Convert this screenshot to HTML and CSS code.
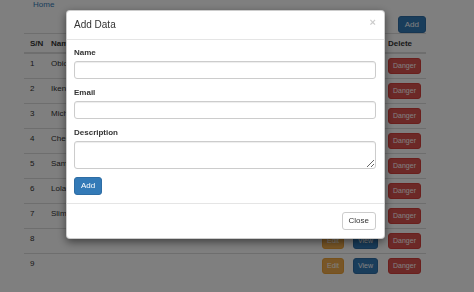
FILE: index.html
```html
<!DOCTYPE html>
<html lang="en">
<head>
<meta charset="utf-8">
<title>Add Data</title>
<link rel="stylesheet" href="styles.css">
</head>
<body>
<div class="page">
  <nav class="nav"><a class="home" href="#">Home</a></nav>
  <div class="toolbar"><button class="btn btn-primary btn-top">Add</button></div>
  <table class="table">
    <colgroup>
      <col class="c-sn"><col class="c-name"><col class="c-edit"><col class="c-view"><col class="c-del">
    </colgroup>
    <thead>
      <tr><th>S/N</th><th>Name</th><th>Edit</th><th>View</th><th>Delete</th></tr>
    </thead>
    <tbody>
      <tr><td>1</td><td>Obiora</td><td><button class="btn btn-xs btn-warning">Edit</button></td><td><button class="btn btn-xs btn-primary">View</button></td><td><button class="btn btn-xs btn-danger">Danger</button></td></tr>
      <tr><td>2</td><td>Ikenna</td><td><button class="btn btn-xs btn-warning">Edit</button></td><td><button class="btn btn-xs btn-primary">View</button></td><td><button class="btn btn-xs btn-danger">Danger</button></td></tr>
      <tr><td>3</td><td>Michael</td><td><button class="btn btn-xs btn-warning">Edit</button></td><td><button class="btn btn-xs btn-primary">View</button></td><td><button class="btn btn-xs btn-danger">Danger</button></td></tr>
      <tr><td>4</td><td>Chester</td><td><button class="btn btn-xs btn-warning">Edit</button></td><td><button class="btn btn-xs btn-primary">View</button></td><td><button class="btn btn-xs btn-danger">Danger</button></td></tr>
      <tr><td>5</td><td>Samuel</td><td><button class="btn btn-xs btn-warning">Edit</button></td><td><button class="btn btn-xs btn-primary">View</button></td><td><button class="btn btn-xs btn-danger">Danger</button></td></tr>
      <tr><td>6</td><td>Lola</td><td><button class="btn btn-xs btn-warning">Edit</button></td><td><button class="btn btn-xs btn-primary">View</button></td><td><button class="btn btn-xs btn-danger">Danger</button></td></tr>
      <tr><td>7</td><td>Slim</td><td><button class="btn btn-xs btn-warning">Edit</button></td><td><button class="btn btn-xs btn-primary">View</button></td><td><button class="btn btn-xs btn-danger">Danger</button></td></tr>
      <tr><td>8</td><td></td><td><button class="btn btn-xs btn-warning">Edit</button></td><td><button class="btn btn-xs btn-primary">View</button></td><td><button class="btn btn-xs btn-danger">Danger</button></td></tr>
      <tr><td>9</td><td></td><td><button class="btn btn-xs btn-warning">Edit</button></td><td><button class="btn btn-xs btn-primary">View</button></td><td><button class="btn btn-xs btn-danger">Danger</button></td></tr>
    </tbody>
  </table>
</div>

<div class="backdrop"></div>
<div class="modal">
  <div class="modal-header">
    <h4 class="modal-title">Add Data</h4>
    <button class="close" type="button">&times;</button>
  </div>
  <form class="modal-body">
    <div class="form-group">
      <label>Name</label>
      <input class="form-control" type="text">
    </div>
    <div class="form-group">
      <label>Email</label>
      <input class="form-control" type="text">
    </div>
    <div class="form-group fg-last">
      <label>Description</label>
      <textarea class="form-control ta"></textarea>
    </div>
    <button class="btn btn-primary btn-md" type="button">Add</button>
  </form>
  <div class="modal-footer">
    <button class="btn btn-default btn-md" type="button">Close</button>
  </div>
</div>
</body>
</html>
```

FILE: styles.css
```css
* { box-sizing: border-box; }
html, body { margin: 0; padding: 0; }
body {
  font-family: "Liberation Sans", Arial, sans-serif;
  font-size: 8px;
  line-height: 12px;
  color: #333;
  background: #fff;
  width: 474px;
  height: 292px;
  overflow: hidden;
}

.page { margin-left: 24px; width: 402px; }
.nav { height: 10px; line-height: 10px; padding-left: 9px; }
.home { color: #337ab7; text-decoration: none; font-size: 8px; }
.toolbar { display: flex; justify-content: flex-end; margin-top: 6px; }

.btn {
  font-family: inherit;
  display: inline-block;
  border: 1px solid transparent;
  border-radius: 3px;
  cursor: pointer;
  text-align: center;
  margin: 0;
  vertical-align: top;
}
.btn-top { height: 17px; padding: 0 6px; font-size: 8px; line-height: 15px; }
.btn-xs { height: 16px; padding: 0 4px; font-size: 7px; line-height: 14px; }
.btn-md { height: 18px; padding: 0 6px; font-size: 8px; line-height: 16px; }
.btn-primary { background: #337ab7; border-color: #2e6da4; color: #fff; }
.btn-warning { background: #f0ad4e; border-color: #eea236; color: #fff; }
.btn-danger { background: #d9534f; border-color: #d43f3a; color: #fff; }
.btn-default { background: #fff; border-color: #ccc; color: #333; }

.table { border-collapse: collapse; table-layout: fixed; width: 402px; }
.c-sn { width: 21px; }
.c-name { width: 271px; }
.c-edit { width: 31px; }
.c-view { width: 35px; }
.c-del { width: 44px; }
.table th {
  text-align: left;
  font-weight: bold;
  padding: 5px 6px 3px;
  line-height: 10px;
  border-top: 1px solid #ddd;
  border-bottom: 2px solid #ddd;
  white-space: nowrap;
}
.table td {
  padding: 4px 6px;
  line-height: 12px;
  border-top: 1px solid #ddd;
  vertical-align: top;
  white-space: nowrap;
}

.backdrop {
  position: fixed;
  inset: 0;
  background: rgba(0, 0, 0, 0.5);
}

.modal {
  position: fixed;
  left: 66px;
  top: 10px;
  width: 319px;
  background: #fff;
  border: 1px solid rgba(0, 0, 0, 0.2);
  border-radius: 4px;
  box-shadow: 0 3px 9px rgba(0, 0, 0, 0.5);
}
.modal-header {
  display: flex;
  justify-content: space-between;
  align-items: flex-start;
  padding: 7px 8px 8px 7px;
  border-bottom: 1px solid #e5e5e5;
}
.modal-title {
  margin: 0;
  font-size: 10px;
  line-height: 13px;
  font-weight: 500;
  color: #333;
}
.close {
  background: none;
  border: 0;
  padding: 0;
  margin: 0;
  font-family: inherit;
  font-size: 11px;
  line-height: 8px;
  font-weight: bold;
  color: #000;
  opacity: 0.2;
  cursor: pointer;
}
.modal-body { padding: 8px 8px 8px 7px; margin: 0; }
.form-group { margin-bottom: 9px; }
.fg-last { margin-bottom: 8px; }
.form-group label {
  display: block;
  font-weight: bold;
  font-size: 8px;
  line-height: 10px;
  margin-bottom: 3px;
}
.form-control {
  display: block;
  width: 100%;
  height: 18px;
  padding: 2px 6px;
  font-family: inherit;
  font-size: 8px;
  color: #555;
  background: #fff;
  border: 1px solid #ccc;
  border-radius: 3px;
  box-shadow: inset 0 1px 1px rgba(0, 0, 0, 0.075);
  margin: 0;
}
.ta { height: 28px; resize: vertical; }
.modal-footer {
  display: flex;
  justify-content: flex-end;
  padding: 8px;
  border-top: 1px solid #e5e5e5;
}
```
